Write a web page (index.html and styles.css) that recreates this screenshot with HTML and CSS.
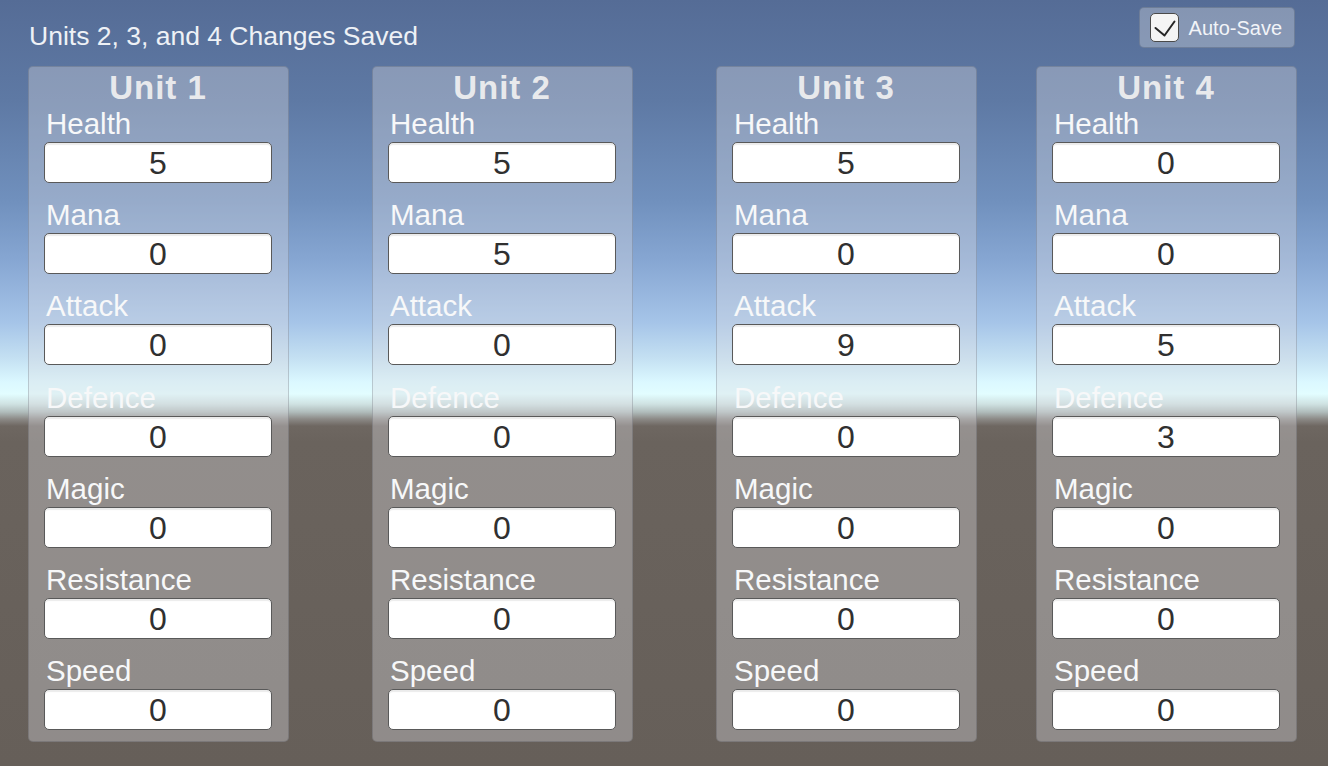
FILE: index.html
```html
<!doctype html>
<html lang="en">
  <head>
    <meta charset="UTF-8" />
    <meta name="viewport" content="width=device-width, initial-scale=1" />
    <title>Unit Stats</title>
    <link rel="stylesheet" href="styles.css">
  </head>
  <body>
    <header class="c-top-bar">
      <p class="c-top-bar__status">Units 2, 3, and 4 Changes Saved</p>

      <label class="c-toggle">
        <span class="c-toggle__box">
          <svg width="29" height="29" viewBox="0 0 29 29" aria-hidden="true">
            <path d="M5.5 15 L14.5 22.5 L24.5 8.5" fill="none" stroke="#262626" stroke-width="2" stroke-linecap="round" stroke-linejoin="round" />
          </svg>
        </span>
        <span class="c-toggle__text">Auto-Save</span>
      </label>
    </header>

    <main class="c-units">
      <section class="c-unit">
        <h2 class="c-unit__title">Unit 1</h2>
        <div class="c-unit__field"><span class="c-unit__label">Health</span><div class="c-unit__input">5</div></div>
        <div class="c-unit__field"><span class="c-unit__label">Mana</span><div class="c-unit__input">0</div></div>
        <div class="c-unit__field"><span class="c-unit__label">Attack</span><div class="c-unit__input">0</div></div>
        <div class="c-unit__field"><span class="c-unit__label">Defence</span><div class="c-unit__input">0</div></div>
        <div class="c-unit__field"><span class="c-unit__label">Magic</span><div class="c-unit__input">0</div></div>
        <div class="c-unit__field"><span class="c-unit__label">Resistance</span><div class="c-unit__input">0</div></div>
        <div class="c-unit__field"><span class="c-unit__label">Speed</span><div class="c-unit__input">0</div></div>
      </section>

      <section class="c-unit">
        <h2 class="c-unit__title">Unit 2</h2>
        <div class="c-unit__field"><span class="c-unit__label">Health</span><div class="c-unit__input">5</div></div>
        <div class="c-unit__field"><span class="c-unit__label">Mana</span><div class="c-unit__input">5</div></div>
        <div class="c-unit__field"><span class="c-unit__label">Attack</span><div class="c-unit__input">0</div></div>
        <div class="c-unit__field"><span class="c-unit__label">Defence</span><div class="c-unit__input">0</div></div>
        <div class="c-unit__field"><span class="c-unit__label">Magic</span><div class="c-unit__input">0</div></div>
        <div class="c-unit__field"><span class="c-unit__label">Resistance</span><div class="c-unit__input">0</div></div>
        <div class="c-unit__field"><span class="c-unit__label">Speed</span><div class="c-unit__input">0</div></div>
      </section>

      <section class="c-unit">
        <h2 class="c-unit__title">Unit 3</h2>
        <div class="c-unit__field"><span class="c-unit__label">Health</span><div class="c-unit__input">5</div></div>
        <div class="c-unit__field"><span class="c-unit__label">Mana</span><div class="c-unit__input">0</div></div>
        <div class="c-unit__field"><span class="c-unit__label">Attack</span><div class="c-unit__input">9</div></div>
        <div class="c-unit__field"><span class="c-unit__label">Defence</span><div class="c-unit__input">0</div></div>
        <div class="c-unit__field"><span class="c-unit__label">Magic</span><div class="c-unit__input">0</div></div>
        <div class="c-unit__field"><span class="c-unit__label">Resistance</span><div class="c-unit__input">0</div></div>
        <div class="c-unit__field"><span class="c-unit__label">Speed</span><div class="c-unit__input">0</div></div>
      </section>

      <section class="c-unit c-unit--last">
        <h2 class="c-unit__title">Unit 4</h2>
        <div class="c-unit__field"><span class="c-unit__label">Health</span><div class="c-unit__input">0</div></div>
        <div class="c-unit__field"><span class="c-unit__label">Mana</span><div class="c-unit__input">0</div></div>
        <div class="c-unit__field"><span class="c-unit__label">Attack</span><div class="c-unit__input">5</div></div>
        <div class="c-unit__field"><span class="c-unit__label">Defence</span><div class="c-unit__input">3</div></div>
        <div class="c-unit__field"><span class="c-unit__label">Magic</span><div class="c-unit__input">0</div></div>
        <div class="c-unit__field"><span class="c-unit__label">Resistance</span><div class="c-unit__input">0</div></div>
        <div class="c-unit__field"><span class="c-unit__label">Speed</span><div class="c-unit__input">0</div></div>
      </section>
    </main>
  </body>
</html>
```

FILE: styles.css
```css
html,
body {
  height: 100%;
}

body {
  margin: 0;
  overflow: hidden;
  font-family: 'Liberation Sans', Arial, sans-serif;
  color: #f2f3f5;
  background: linear-gradient(
    to bottom,
    #556c96 0px,
    #5e79a4 100px,
    #7090bd 200px,
    #87a7d3 262px,
    #a5c4e8 322px,
    #c4e0f2 358px,
    #dbf8ff 382px,
    #e2fdff 394px,
    #cfe2e2 404px,
    #b0bcbb 412px,
    #8c8a87 419px,
    #6e6761 426px,
    #6a635d 442px,
    #665f59 766px
  );
}

.c-top-bar {
  display: flex;
  justify-content: space-between;
  align-items: flex-start;
  height: 66px;
  padding: 0 33px 0 29px;
}

.c-top-bar__status {
  margin: 20px 0 0;
  font-size: 26.5px;
  line-height: 32px;
  color: #eef1f6;
}

.c-toggle {
  display: flex;
  align-items: center;
  gap: 10px;
  margin-top: 7px;
  height: 41px;
  padding: 0 12px 0 10px;
  box-sizing: border-box;
  background: rgba(225, 228, 232, 0.34);
  border: 1px solid rgba(40, 50, 70, 0.25);
  border-radius: 5px;
}

.c-toggle__box {
  display: block;
  width: 29px;
  height: 29px;
  box-sizing: border-box;
  background: #f4f4f4;
  border: 1px solid #4a4a4a;
  border-radius: 5px;
}

.c-toggle__box svg {
  display: block;
  margin: -1px;
}

.c-toggle__text {
  padding-top: 2px;
  font-size: 20px;
  color: #f2f4f8;
}

.c-units {
  display: flex;
  padding: 0 0 0 28px;
}

.c-unit {
  display: flex;
  flex-direction: column;
  flex-shrink: 0;
  width: 261px;
  height: 676px;
  box-sizing: border-box;
  padding: 3px 16px 0 15px;
  background: rgba(218, 220, 224, 0.36);
  border: 1px solid rgba(40, 45, 60, 0.2);
  border-radius: 5px;
}

.c-unit + .c-unit {
  margin-left: 83px;
}

.c-unit--last.c-unit {
  margin-left: 59px;
}

.c-unit__title {
  margin: 0;
  font-size: 33px;
  line-height: 36px;
  font-weight: 700;
  letter-spacing: 1px;
  text-align: center;
  color: rgba(242, 242, 242, 0.92);
}

.c-unit__field {
  display: flex;
  flex-direction: column;
  gap: 3px;
  margin-top: 3px;
}

.c-unit__field + .c-unit__field {
  margin-top: 17.2px;
}

.c-unit__label {
  padding-left: 2px;
  font-size: 29.5px;
  line-height: 30px;
  color: #f7f8f9;
}

.c-unit__input {
  height: 41px;
  box-sizing: border-box;
  font-size: 32px;
  line-height: 41px;
  text-align: center;
  color: #303030;
  background: #fff;
  border: 1px solid #595959;
  border-radius: 5px;
  box-shadow: inset 0 2px 1px rgba(0, 0, 0, 0.08);
}
```
